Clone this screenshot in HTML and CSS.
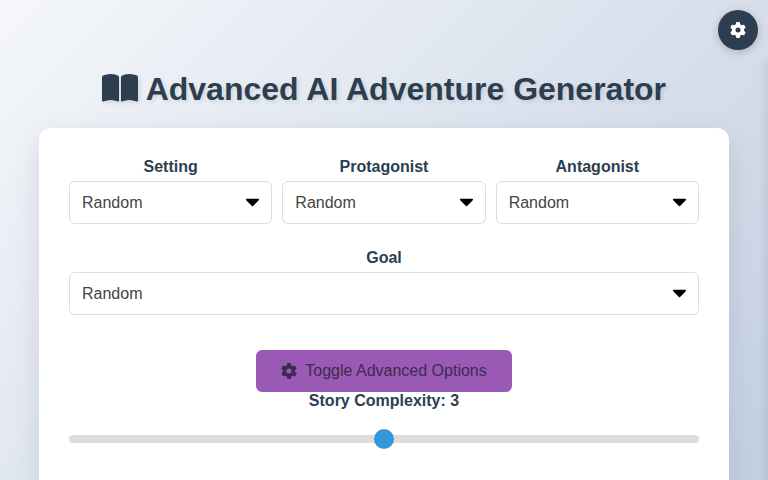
FILE: index.html
```html
<!DOCTYPE html>
<html lang="en">
<head>
    <meta charset="UTF-8">
    <meta name="viewport" content="width=device-width, initial-scale=1.0">
    <title>Advanced AI Adventure Generator</title>
    <link rel="stylesheet" href="styles.css">
</head>
<body>

    <button class="settings-btn" aria-label="Settings">
        <svg class="icon" viewBox="0 0 512 512"><path d="M495.9 166.6c3.2 8.7 .5 18.4-6.4 24.6l-43.3 39.4c1.1 8.3 1.7 16.8 1.7 25.4s-.6 17.1-1.7 25.4l43.3 39.4c6.9 6.2 9.6 15.9 6.4 24.6c-4.4 11.9-9.7 23.3-15.8 34.3l-4.7 8.1c-6.6 11-14 21.4-22.1 31.2c-5.9 7.2-15.7 9.6-24.5 6.8l-55.7-17.7c-13.4 10.3-28.2 18.9-44 25.4l-12.5 57.1c-2 9.1-9 16.3-18.2 17.8c-13.8 2.3-28 3.5-42.5 3.5s-28.7-1.2-42.5-3.5c-9.2-1.5-16.2-8.7-18.2-17.8l-12.5-57.1c-15.8-6.5-30.6-15.1-44-25.4L83.1 425.9c-8.8 2.8-18.6 .3-24.5-6.8c-8.1-9.8-15.5-20.2-22.1-31.2l-4.7-8.1c-6.1-11-11.4-22.4-15.8-34.3c-3.2-8.7-.5-18.4 6.4-24.6l43.3-39.4C64.6 273.1 64 264.6 64 256s.6-17.1 1.7-25.4L22.4 191.2c-6.9-6.2-9.6-15.9-6.4-24.6c4.4-11.9 9.7-23.3 15.8-34.3l4.7-8.1c6.6-11 14-21.4 22.1-31.2c5.9-7.2 15.7-9.6 24.5-6.8l55.7 17.7c13.4-10.3 28.2-18.9 44-25.4l12.5-57.1c2-9.1 9-16.3 18.2-17.8C227.3 1.2 241.5 0 256 0s28.7 1.2 42.5 3.5c9.2 1.5 16.2 8.7 18.2 17.8l12.5 57.1c15.8 6.5 30.6 15.1 44 25.4l55.7-17.7c8.8-2.8 18.6-.3 24.5 6.8c8.1 9.8 15.5 20.2 22.1 31.2l4.7 8.1c6.1 11 11.4 22.4 15.8 34.3zM256 336a80 80 0 1 0 0-160 80 80 0 1 0 0 160z"/></svg>
    </button>

    <!-- Closed settings panel, only its shadow shows at the right edge -->
    <div class="settings-panel"></div>

    <div class="container">
        <h1>
            <svg class="title-icon" viewBox="0 0 576 512"><path d="M249.6 471.5c10.8 3.8 22.4-4.1 22.4-15.5V78.6c0-4.2-1.6-8.4-5-11C247.4 52 202.4 32 144 32C93.5 32 46.3 45.3 18.1 56.1C6.8 60.5 0 71.7 0 83.8V454.1c0 11.9 12.8 20.2 24.1 16.5C55.6 460.1 105.5 448 144 448c33.9 0 79 14 105.6 23.5zm76.8 0C353 462 398.1 448 432 448c38.5 0 88.4 12.1 119.9 22.6c11.3 3.8 24.1-4.6 24.1-16.5V83.8c0-12.2-6.8-23.3-18.1-27.6C529.7 45.3 482.5 32 432 32c-58.4 0-103.4 20-123 35.6c-3.3 2.6-5 6.8-5 11V456c0 11.4 11.7 19.3 22.4 15.5z"/></svg>
            Advanced AI Adventure Generator
        </h1>

        <div class="card">
            <div class="grid">
                <div class="field">
                    <label for="setting">Setting</label>
                    <select id="setting"><option>Random</option></select>
                </div>
                <div class="field">
                    <label for="protagonist">Protagonist</label>
                    <select id="protagonist"><option>Random</option></select>
                </div>
                <div class="field">
                    <label for="antagonist">Antagonist</label>
                    <select id="antagonist"><option>Random</option></select>
                </div>
                <div class="field wide">
                    <label for="goal">Goal</label>
                    <select id="goal"><option>Random</option></select>
                </div>
            </div>

            <button class="toggle-btn">
                <svg class="icon" viewBox="0 0 512 512"><path d="M495.9 166.6c3.2 8.7 .5 18.4-6.4 24.6l-43.3 39.4c1.1 8.3 1.7 16.8 1.7 25.4s-.6 17.1-1.7 25.4l43.3 39.4c6.9 6.2 9.6 15.9 6.4 24.6c-4.4 11.9-9.7 23.3-15.8 34.3l-4.7 8.1c-6.6 11-14 21.4-22.1 31.2c-5.9 7.2-15.7 9.6-24.5 6.8l-55.7-17.7c-13.4 10.3-28.2 18.9-44 25.4l-12.5 57.1c-2 9.1-9 16.3-18.2 17.8c-13.8 2.3-28 3.5-42.5 3.5s-28.7-1.2-42.5-3.5c-9.2-1.5-16.2-8.7-18.2-17.8l-12.5-57.1c-15.8-6.5-30.6-15.1-44-25.4L83.1 425.9c-8.8 2.8-18.6 .3-24.5-6.8c-8.1-9.8-15.5-20.2-22.1-31.2l-4.7-8.1c-6.1-11-11.4-22.4-15.8-34.3c-3.2-8.7-.5-18.4 6.4-24.6l43.3-39.4C64.6 273.1 64 264.6 64 256s.6-17.1 1.7-25.4L22.4 191.2c-6.9-6.2-9.6-15.9-6.4-24.6c4.4-11.9 9.7-23.3 15.8-34.3l4.7-8.1c6.6-11 14-21.4 22.1-31.2c5.9-7.2 15.7-9.6 24.5-6.8l55.7 17.7c13.4-10.3 28.2-18.9 44-25.4l12.5-57.1c2-9.1 9-16.3 18.2-17.8C227.3 1.2 241.5 0 256 0s28.7 1.2 42.5 3.5c9.2 1.5 16.2 8.7 18.2 17.8l12.5 57.1c15.8 6.5 30.6 15.1 44 25.4l55.7-17.7c8.8-2.8 18.6-.3 24.5 6.8c8.1 9.8 15.5 20.2 22.1 31.2l4.7 8.1c6.1 11 11.4 22.4 15.8 34.3zM256 336a80 80 0 1 0 0-160 80 80 0 1 0 0 160z"/></svg>
                Toggle Advanced Options
            </button>

            <div class="complexity">
                <label for="complexity">Story Complexity: 3</label>
                <input type="range" id="complexity" min="1" max="5" value="3">
            </div>
        </div>
    </div>

</body>
</html>
```

FILE: styles.css
```css
* {
    box-sizing: border-box;
}
html, body {
    height: 100%;
    margin: 0;
    overflow: hidden;
}
body {
    font-family: "Liberation Sans", Arial, sans-serif;
    background: linear-gradient(135deg, #f5f7fa 0%, #c3cfe2 100%);
    color: #2c3e50;
    padding: 20px 0;
}
.container {
    width: 690px;
    margin: 0 auto;
}
h1 {
    margin: 47px 0 17px;
    text-align: center;
    font-size: 32px;
    line-height: 44px;
    color: #2c3e50;
    text-shadow: 2px 2px 4px rgba(0, 0, 0, 0.1);
}
.title-icon {
    width: 36px;
    height: 32px;
    fill: #2c3e50;
    vertical-align: -4px;
    filter: drop-shadow(2px 2px 2px rgba(0, 0, 0, 0.1));
}
.icon {
    width: 16px;
    height: 16px;
    fill: currentColor;
}
.settings-btn {
    position: absolute;
    top: 10px;
    right: 10px;
    width: 40px;
    height: 40px;
    border: none;
    border-radius: 50%;
    background-color: #2c3e50;
    color: white;
    box-shadow: 0 2px 10px rgba(0, 0, 0, 0.2);
    display: flex;
    align-items: center;
    justify-content: center;
    cursor: pointer;
}
.settings-panel {
    position: fixed;
    top: 60px;
    right: -300px;
    bottom: 0;
    width: 300px;
    background-color: white;
    box-shadow: -2px 0 10px rgba(0, 0, 0, 0.1);
}
.card {
    background-color: white;
    border-radius: 12px;
    padding: 30px;
    min-height: 400px;
    box-shadow: 0 10px 30px rgba(0, 0, 0, 0.1);
}
.grid {
    display: grid;
    grid-template-columns: repeat(3, 1fr);
    gap: 25px 10px;
}
.wide {
    grid-column: 1 / -1;
}
.field label {
    display: block;
    text-align: center;
    font-weight: bold;
    margin-bottom: 5px;
}
select {
    width: 100%;
    height: 43px;
    padding: 0 12px;
    font-family: inherit;
    font-size: 16px;
    color: #444;
    background: white url("data:image/svg+xml,%3Csvg xmlns='http://www.w3.org/2000/svg' viewBox='0 0 292.4 292.4'%3E%3Cpath d='M287 69.4a17.6 17.6 0 0 0-13-5.4H18.4c-5 0-9.3 1.8-12.9 5.4A17.6 17.6 0 0 0 0 82.2c0 5 1.8 9.3 5.4 12.9l128 127.9c3.6 3.6 7.8 5.4 12.8 5.4s9.4-1.8 13-5.4l127.9-128c3.5-3.5 5.4-7.8 5.4-12.8 0-5-1.9-9.2-5.5-12.8z'/%3E%3C/svg%3E") no-repeat right 12px center / 13px;
    border: 1px solid #ddd;
    border-radius: 6px;
    appearance: none;
}
.toggle-btn {
    display: flex;
    align-items: center;
    justify-content: center;
    gap: 8px;
    width: 256px;
    height: 42px;
    margin: 35px auto 0;
    border: none;
    border-radius: 6px;
    background-color: #9b59b6;
    color: #3a2c4c;
    font-family: inherit;
    font-size: 16px;
    cursor: pointer;
}
.complexity label {
    display: block;
    text-align: center;
    font-weight: bold;
    margin-bottom: 5px;
}
input[type="range"] {
    display: block;
    width: 100%;
    height: 8px;
    margin: 25px 0 0;
    background: #ddd;
    border-radius: 5px;
    appearance: none;
}
input[type="range"]::-webkit-slider-thumb {
    appearance: none;
    width: 20px;
    height: 20px;
    border-radius: 50%;
    background: #3498db;
}
```
